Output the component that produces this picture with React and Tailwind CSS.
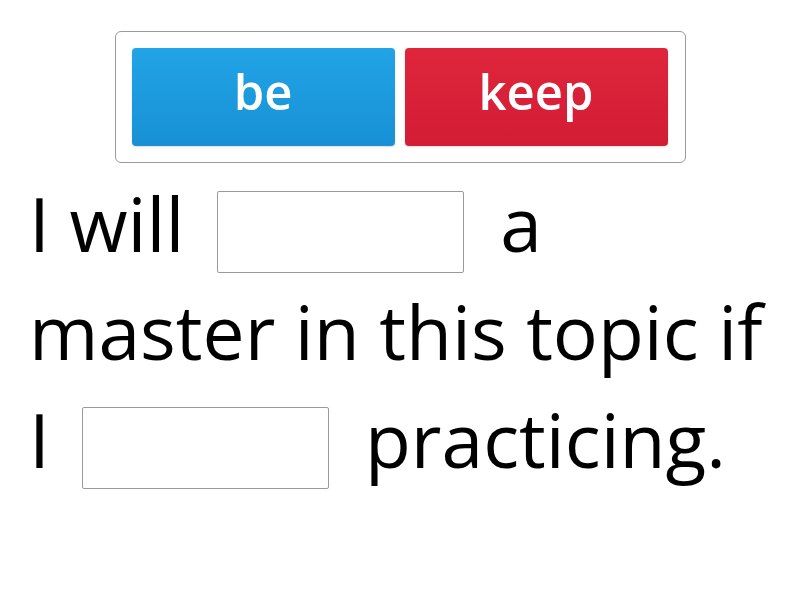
export default function App() {
  const font = { fontFamily: '"Open Sans", "Noto Sans", sans-serif' };
  return (
    <div className="w-[800px] h-[600px] bg-white overflow-hidden" style={font}>
      <div className="pt-[31px] flex justify-center">
        <div className="w-[571px] h-[132px] border-[1.5px] border-[#9a9a9a] rounded-[6px] flex gap-[10px] px-[16px] pt-[16px]">
          <div className="w-[263px] h-[98px] rounded-[4px] bg-gradient-to-b from-[#21a4e6] to-[#1890d6] shadow-[0_1px_2px_rgba(0,0,0,0.15)] flex items-center justify-center text-white text-[49px] font-semibold leading-none pb-[12px]">
            be
          </div>
          <div className="w-[263px] h-[98px] rounded-[4px] bg-gradient-to-b from-[#de253b] to-[#d31d35] shadow-[0_1px_2px_rgba(0,0,0,0.15)] flex items-center justify-center text-white text-[49px] font-semibold leading-none pb-[12px]">
            keep
          </div>
        </div>
      </div>
      <div className="pl-[29px] mt-[6px] text-[75px] leading-[108px] text-black">
        I will{" "}
        <span className="inline-block align-middle w-[247px] h-[82px] ml-[13px] mr-[17px] border-[1.5px] border-[#9a9a9a] rounded-[2px] bg-white"></span>{" "}
        a master in this topic if I{" "}
        <span className="inline-block align-middle w-[247px] h-[82px] ml-[13px] mr-[16px] border-[1.5px] border-[#9a9a9a] rounded-[2px] bg-white"></span>{" "}
        practicing.
      </div>
    </div>
  );
}
